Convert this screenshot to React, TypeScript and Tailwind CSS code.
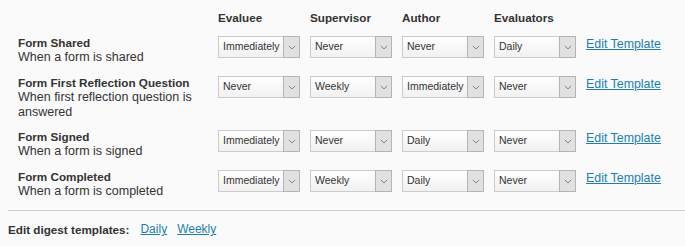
import React from "react";

const rows = [
  { title: "Form Shared", sub: "When a form is shared", vals: ["Immediately", "Never", "Never", "Daily"], pb: "pb-[10px]" },
  { title: "Form First Reflection Question", sub: "When first reflection question is answered", vals: ["Never", "Weekly", "Immediately", "Never"], pb: "pb-[9px]" },
  { title: "Form Signed", sub: "When a form is signed", vals: ["Immediately", "Never", "Daily", "Never"], pb: "pb-[10px]" },
  { title: "Form Completed", sub: "When a form is completed", vals: ["Immediately", "Weekly", "Daily", "Never"], pb: "pb-[11px]" },
];

function Select({ value }: { value: string }) {
  return (
    <div className="mt-px flex h-[22px] w-[82px] items-stretch border border-[#cbcbcb] bg-gradient-to-b from-white to-[#f1f1f1]">
      <div className="flex flex-1 items-center overflow-hidden whitespace-nowrap pl-[4px] text-[10.5px] text-[#333]">{value}</div>
      <div className="-my-px -mr-px flex w-[17px] items-center justify-center border border-[#b4b4b4] bg-[#e1e1e1]">
        <svg width="8" height="5" viewBox="0 0 8 5" fill="none">
          <path d="M0.8 0.8 L4 4 L7.2 0.8" stroke="#777" strokeWidth="0.9" />
        </svg>
      </div>
    </div>
  );
}

export default function App() {
  return (
    <div
      className="h-[246px] w-[685px] bg-[#fafafa] text-[#333]"
      style={{ fontFamily: '"Liberation Sans", Arial, sans-serif' }}
    >
      <div className="grid grid-cols-[190px_82px_82px_82px_82px_auto] gap-x-[10px] pl-[18px] pt-[10px]">
        <div />
        <div className="text-[11.7px] font-bold leading-[15px]">Evaluee</div>
        <div className="text-[11.7px] font-bold leading-[15px]">Supervisor</div>
        <div className="text-[11.7px] font-bold leading-[15px]">Author</div>
        <div className="text-[11.7px] font-bold leading-[15px]">Evaluators</div>
        <div />
        <div className="col-span-6 h-[10px]" />
        {rows.map((r, i) => (
          <React.Fragment key={i}>
            <div className={r.pb}>
              <div className="text-[11.7px] font-bold leading-[15px]">{r.title}</div>
              <div className="text-[12.5px] leading-[15px]">{r.sub}</div>
            </div>
            {r.vals.map((v, j) => (
              <div key={j}>
                <Select value={v} />
              </div>
            ))}
            <div className="pt-[2px] text-[12.4px] leading-[15px]">
              <a href="#" className="text-[#1c7fb1] underline">
                Edit Template
              </a>
            </div>
          </React.Fragment>
        ))}
      </div>
      <div className="ml-[8px] border-t border-[#cfcfcf]" />
      <div className="flex items-center pl-[8px] pt-[11px] text-[12px] leading-[15px]">
        <span className="text-[11.7px] font-bold">Edit digest templates:</span>
        <a href="#" className="ml-[11px] text-[#1c7fb1] underline">Daily</a>
        <a href="#" className="ml-[10px] text-[#1c7fb1] underline">Weekly</a>
      </div>
    </div>
  );
}
